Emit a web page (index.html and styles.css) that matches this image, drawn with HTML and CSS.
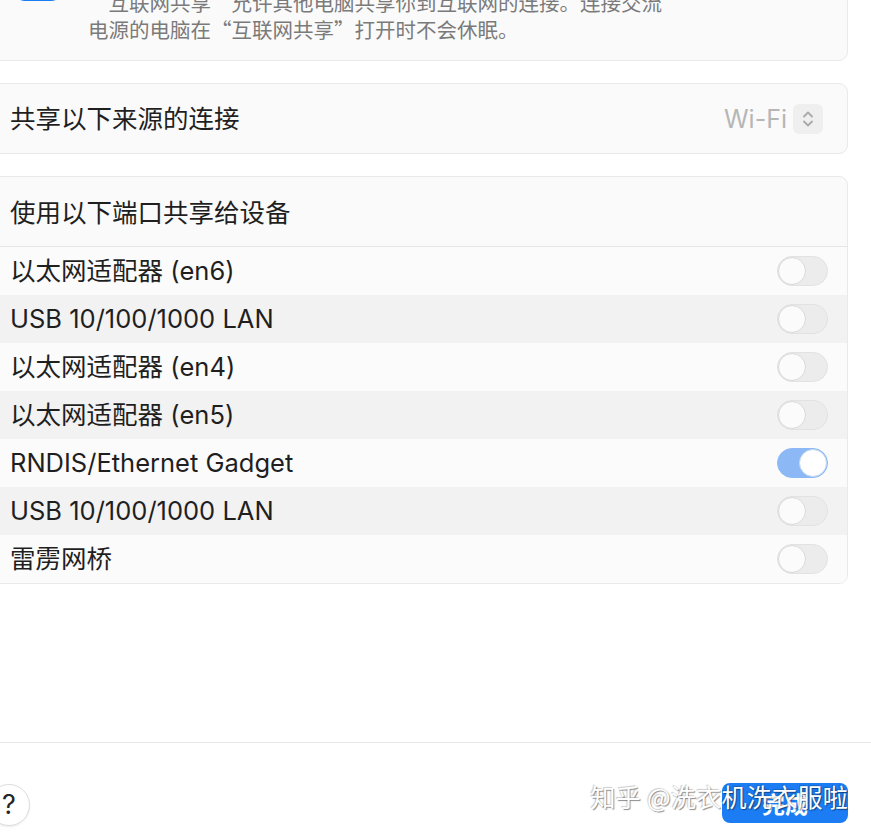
FILE: index.html
```html
<!DOCTYPE html>
<html lang="zh-CN">
<head>
<meta charset="utf-8">
<title>互联网共享</title>
<link rel="stylesheet" href="styles.css">
</head>
<body>
<div class="page">
  <div class="main">
    <section class="card intro">
      <div class="app-icon"></div>
      <div class="intro-text">
        <div class="desc">“互联网共享”允许其他电脑共享你到互联网的连接。连接交流</div>
        <div class="desc">电源的电脑在“互联网共享”打开时不会休眠。</div>
      </div>
    </section>

    <section class="card source">
      <span class="label">共享以下来源的连接</span>
      <div class="picker">
        <span class="picker-value">Wi-Fi</span>
        <span class="stepper">
          <svg width="16" height="22" viewBox="0 0 16 22"><path d="M4 8.5 L8 4.5 L12 8.5" fill="none" stroke="#a9a9a9" stroke-width="1.8" stroke-linecap="round" stroke-linejoin="round"/><path d="M4 13.5 L8 17.5 L12 13.5" fill="none" stroke="#a9a9a9" stroke-width="1.8" stroke-linecap="round" stroke-linejoin="round"/></svg>
        </span>
      </div>
    </section>

    <section class="card ports">
      <div class="ports-head">使用以下端口共享给设备</div>
      <div class="row"><span class="label">以太网适配器 (en6)</span><span class="toggle"></span></div>
      <div class="row alt"><span class="label">USB 10/100/1000 LAN</span><span class="toggle"></span></div>
      <div class="row"><span class="label">以太网适配器 (en4)</span><span class="toggle"></span></div>
      <div class="row alt"><span class="label">以太网适配器 (en5)</span><span class="toggle"></span></div>
      <div class="row"><span class="label">RNDIS/Ethernet Gadget</span><span class="toggle on"></span></div>
      <div class="row alt"><span class="label">USB 10/100/1000 LAN</span><span class="toggle"></span></div>
      <div class="row"><span class="label">雷雳网桥</span><span class="toggle"></span></div>
    </section>
  </div>

  <footer class="footer">
    <button class="help">?</button>
    <div class="done-wrap">
      <button class="done">完成</button>
      <span class="watermark">知乎 @洗衣机洗衣服啦</span>
    </div>
  </footer>
</div>
</body>
</html>
```

FILE: styles.css
```css
html, body {
  margin: 0;
  padding: 0;
  background: #ffffff;
  overflow: hidden;
}
body {
  width: 871px;
  height: 832px;
  font-family: "Inter", "Noto Sans CJK SC", sans-serif;
  color: #1f1f1f;
}
.page {
  display: flex;
  flex-direction: column;
  height: 832px;
}
.main {
  margin-left: -10px;
  width: 858px;
  display: flex;
  flex-direction: column;
  gap: 22px;
  margin-top: -70px;
}
.card {
  background: #fafafa;
  border: 1px solid #e9e9e9;
  border-radius: 9px;
  box-sizing: border-box;
}
.intro {
  display: flex;
  align-items: flex-start;
  gap: 26px;
  padding: 22px 20px 16px 23px;
  height: 131px;
}
.app-icon {
  width: 48px;
  height: 48px;
  border-radius: 11px;
  background: #1a7cf5;
  flex: none;
}
.intro-text {
  margin-top: 36px;
  font-family: "Noto Sans CJK SC", sans-serif;
}
.desc {
  font-size: 20.5px;
  line-height: 27px;
  color: #7a7a7a;
  white-space: nowrap;
}
.source {
  height: 71px;
  display: flex;
  align-items: center;
  justify-content: space-between;
  padding: 0 24px 0 19px;
}
.label {
  font-size: 25.5px;
  line-height: 30px;
  white-space: nowrap;
}
.picker {
  display: flex;
  align-items: center;
  gap: 6px;
}
.picker-value {
  font-size: 25px;
  color: #b6b6b6;
}
.stepper {
  width: 30px;
  height: 30px;
  border-radius: 6px;
  background: #efefef;
  display: flex;
  align-items: center;
  justify-content: center;
}
.ports {
  overflow: hidden;
}
.ports-head {
  height: 70px;
  display: flex;
  align-items: center;
  padding-left: 19px;
  padding-bottom: 2px;
  box-sizing: border-box;
  font-size: 25.5px;
  border-bottom: 1px solid #e6e6e6;
}
.row {
  height: 48px;
  display: flex;
  align-items: center;
  justify-content: space-between;
  padding: 0 19px 0 19px;
  background: #fbfbfb;
}
.row.alt {
  background: #f2f2f2;
}
.toggle {
  position: relative;
  width: 51px;
  height: 30px;
  border-radius: 15px;
  background: #ececec;
  box-sizing: border-box;
  border: 1px solid #e2e2e2;
  flex: none;
}
.toggle::after {
  content: "";
  position: absolute;
  top: 0;
  left: 0;
  width: 28px;
  height: 28px;
  border-radius: 50%;
  background: #fbfbfb;
  box-sizing: border-box;
  border: 1px solid #d9d9d9;
}
.toggle.on {
  background: #8cb9f6;
  border-color: #8cb9f6;
}
.toggle.on::after {
  left: auto;
  right: 0;
  background: #ffffff;
  border-color: #c3d6f0;
}
.footer {
  margin-top: auto;
  border-top: 1px solid #e8e8e8;
  height: 90px;
  box-sizing: border-box;
  display: flex;
  align-items: flex-start;
  justify-content: space-between;
  padding: 40px 23px 0 0;
}
.help {
  margin-left: -12px;
  width: 42px;
  height: 42px;
  border-radius: 50%;
  border: 1px solid #dedede;
  background: #ffffff;
  box-shadow: 0 1px 2px rgba(0,0,0,0.08);
  font-family: "Inter", sans-serif;
  font-size: 27px;
  color: #262626;
  padding: 0;
  text-align: center;
  line-height: 40px;
  margin-top: 1px;
}
.done-wrap {
  position: relative;
}
.done {
  width: 126px;
  height: 40px;
  border: none;
  border-radius: 8px;
  background: #1b7cf3;
  color: #ffffff;
  font-family: "Noto Sans CJK SC", sans-serif;
  font-size: 23px;
  font-weight: 700;
  padding: 0;
  line-height: 40px;
}
.watermark {
  position: absolute;
  right: 0;
  top: -2px;
  white-space: nowrap;
  font-family: "Noto Sans CJK SC", sans-serif;
  font-size: 25px;
  line-height: 30px;
  color: #ffffff;
  text-shadow: 1px 1px 1px rgba(0,0,0,0.45), -1px -1px 1px rgba(0,0,0,0.2);
  letter-spacing: 0.3px;
}
```
